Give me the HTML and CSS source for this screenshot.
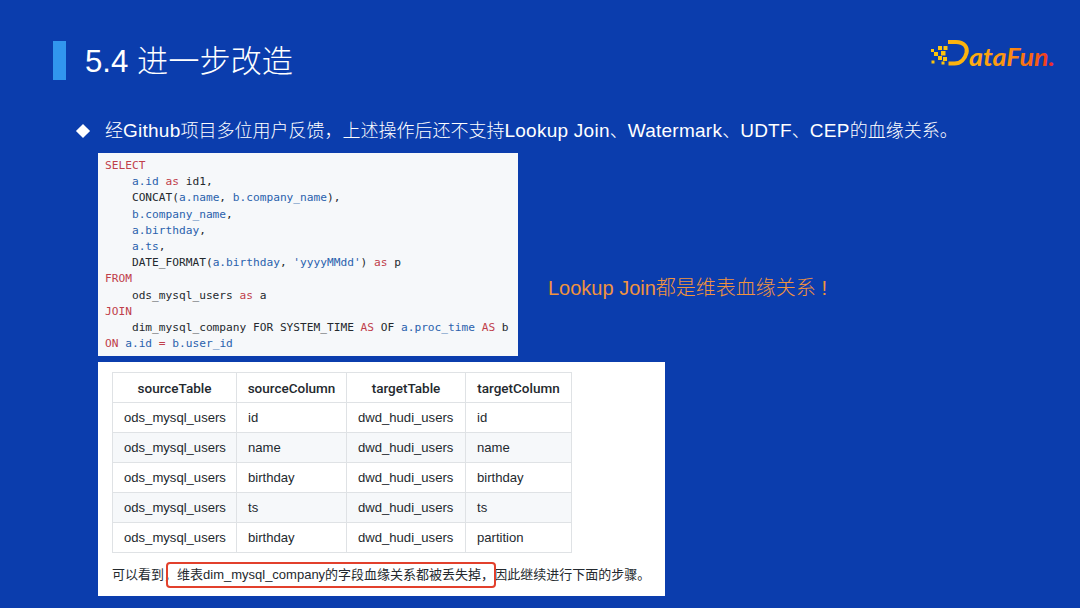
FILE: index.html
```html
<!DOCTYPE html>
<html lang="zh">
<head>
<meta charset="utf-8">
<title>5.4 进一步改造</title>
<link rel="stylesheet" href="styles.css">
</head>
<body>
<main class="slide">
  <header class="head">
    <div class="head-left">
      <span class="accent"></span>
      <h1 class="title">5.4 进一步改造</h1>
    </div>
    <svg class="logo" viewBox="0 0 132 30" width="132" height="30" aria-label="DataFun">
      <defs>
        <linearGradient id="lg" x1="0" x2="1" y1="0" y2="0">
          <stop offset="0" stop-color="#fdb010"/>
          <stop offset="0.45" stop-color="#fb9212"/>
          <stop offset="0.8" stop-color="#f55a16"/>
          <stop offset="1" stop-color="#ee1f2c"/>
        </linearGradient>
      </defs>
      <g fill="#fcc40e">
        <rect x="0" y="11" width="3" height="3"/>
        <rect x="7" y="8" width="4" height="4"/>
        <rect x="12.500" y="8" width="4" height="4"/>
        <rect x="3" y="14" width="4" height="4"/>
        <rect x="10" y="13" width="4.500" height="4.500"/>
        <rect x="0.500" y="22.500" width="3" height="3"/>
        <rect x="7" y="18" width="4" height="4"/>
        <rect x="12" y="19" width="4" height="4"/>
        <rect x="10.500" y="23.500" width="3" height="3"/>
      </g>
      <path d="M17 4h8c8 0 12 5 10.500 11c-1.500 6-6 10.500-12 10.500h-6" fill="none" stroke="#fcb30f" stroke-width="4"/>
      <text class="logo-text" x="38" y="27.500" fill="url(#lg)" textLength="86" lengthAdjust="spacingAndGlyphs">ataFun.</text>
    </svg>
  </header>

  <p class="lead"><span class="diamond"></span><span>经<span class="lat">Github</span>项目多位用户反馈，上述操作后还不支持<span class="lat">Lookup Join</span>、<span class="lat">Watermark</span>、<span class="lat">UDTF</span>、<span class="lat">CEP</span>的血缘关系。</span></p>

  <div class="row">
    <pre class="code"><span class="kw">SELECT</span>
    <span class="id">a.id</span> <span class="kw">as</span> id1,
    CONCAT(<span class="id">a.name</span>, <span class="id">b.company_name</span>),
    <span class="id">b.company_name</span>,
    <span class="id">a.birthday</span>,
    <span class="id">a.ts</span>,
    DATE_FORMAT(<span class="id">a.birthday</span>, <span class="id">'yyyyMMdd'</span>) <span class="kw">as</span> p
<span class="kw">FROM</span>
    ods_mysql_users <span class="kw">as</span> a
<span class="kw">JOIN</span>
    dim_mysql_company FOR SYSTEM_TIME <span class="kw">AS</span> OF <span class="id">a.proc_time</span> <span class="kw">AS</span> b
<span class="kw">ON</span> <span class="id">a.id</span> <span class="kw">=</span> <span class="id">b.user_id</span></pre>
    <p class="note">Lookup Join都是维表血缘关系 !</p>
  </div>

  <section class="doc">
    <table class="lineage">
      <thead>
        <tr><th>sourceTable</th><th>sourceColumn</th><th>targetTable</th><th>targetColumn</th></tr>
      </thead>
      <tbody>
        <tr><td>ods_mysql_users</td><td>id</td><td>dwd_hudi_users</td><td>id</td></tr>
        <tr><td>ods_mysql_users</td><td>name</td><td>dwd_hudi_users</td><td>name</td></tr>
        <tr><td>ods_mysql_users</td><td>birthday</td><td>dwd_hudi_users</td><td>birthday</td></tr>
        <tr><td>ods_mysql_users</td><td>ts</td><td>dwd_hudi_users</td><td>ts</td></tr>
        <tr><td>ods_mysql_users</td><td>birthday</td><td>dwd_hudi_users</td><td>partition</td></tr>
      </tbody>
    </table>
    <p class="caption">可以看到，<mark class="hl">维表dim_mysql_company的字段血缘关系都被丢失掉，</mark>因此继续进行下面的步骤。</p>
  </section>
</main>
</body>
</html>
```
FILE: styles.css
```css
* { box-sizing: border-box; }
html, body { margin: 0; padding: 0; }
body { width: 1080px; height: 608px; overflow: hidden; background: #0b3dad; }
.slide {
  width: 1080px;
  height: 608px;
  padding: 41px 0 0 53px;
  color: #fff;
  font-family: "Liberation Sans", "Noto Sans CJK SC", sans-serif;
}
.head { display: flex; justify-content: space-between; align-items: flex-start; height: 39px; }
.head-left { display: flex; align-items: center; gap: 19px; height: 39px; }
.accent { width: 13px; height: 39px; background: #3196ee; }
.title { margin: 2px 0 0; font-size: 31.2px; font-weight: 300; line-height: 39px; }
.logo { margin: -3px 17px 0 0; overflow: visible; }
.logo-text { font-family: "Lato", sans-serif; font-style: italic; font-weight: 700; font-size: 24px; }
.lead {
  display: flex;
  align-items: center;
  margin: 40px 0 0 23px;
  height: 22px;
  font-size: 18px;
  font-weight: 300;
  line-height: 22px;
  white-space: nowrap;
}
.lat { font-size: 19px; letter-spacing: 0.25px; }
.diamond {
  width: 10px;
  height: 10px;
  margin: 0 17px 0 2px;
  background: #fff;
  transform: rotate(45deg);
  flex: none;
}
.row { display: flex; align-items: flex-start; gap: 30px; margin: 11px 0 0 45px; }
.code {
  margin: 0;
  width: 420px;
  height: 203px;
  padding: 5px 0 0 7px;
  background: #f6f8fa;
  color: #24292e;
  font-family: "DejaVu Sans Mono", monospace;
  font-size: 11.18px;
  line-height: 16.2px;
  overflow: hidden;
}
.kw { color: #c0404a; }
.id { color: #2a62ad; }
.note { margin: 122px 0 0; color: #f0933e; font-size: 20px; font-weight: 300; line-height: 26px; white-space: nowrap; }
.doc {
  width: 567px;
  height: 234px;
  margin: 6px 0 0 45px;
  padding: 10px 14px 0;
  background: #fff;
  color: #24292e;
}
.lineage { border-collapse: collapse; table-layout: fixed; width: 460px; font-size: 13.1px; }
.lineage th, .lineage td { border: 1px solid #dfe2e5; height: 30px; padding: 0 11px; text-align: left; white-space: nowrap; }
.lineage th { text-align: center; font-family: "Roboto", sans-serif; font-size: 13.5px; font-weight: 500; padding: 0; }
.lineage th:nth-child(1), .lineage td:nth-child(1) { width: 124px; }
.lineage th:nth-child(2), .lineage td:nth-child(2) { width: 110px; }
.lineage th:nth-child(3), .lineage td:nth-child(3) { width: 119px; }
.lineage tbody tr:nth-child(even) { background: #f6f8fa; }
.caption { margin: 12px 0 0; font-size: 13px; line-height: 20px; white-space: nowrap; }
.hl {
  position: relative;
  display: inline-block;
  background: transparent;
  color: inherit;
}
.hl::after {
  content: "";
  position: absolute;
  left: -11px;
  right: -2px;
  top: -3px;
  bottom: -3px;
  border: 2px solid #e2402c;
  border-radius: 4px;
}
```
